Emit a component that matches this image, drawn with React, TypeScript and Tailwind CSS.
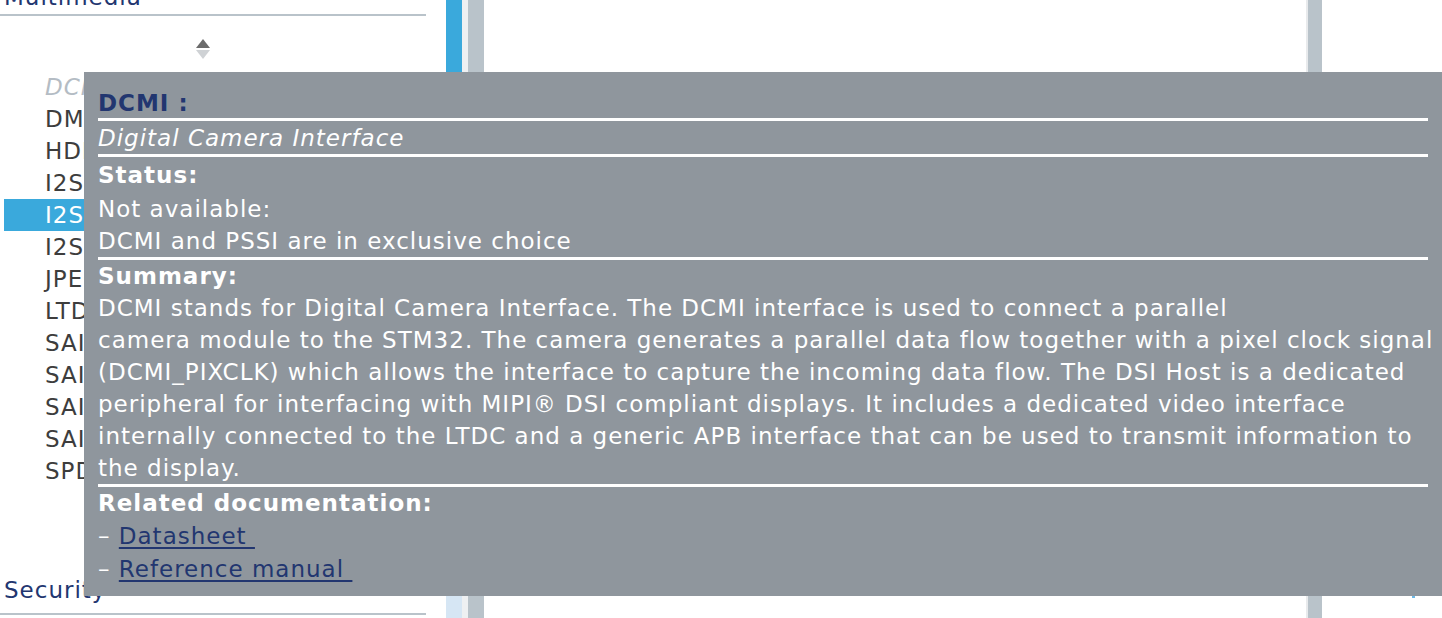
const listItems = [
  'DCMI',
  'DMA2D',
  'HDMI_CEC',
  'I2S1',
  'I2S2',
  'I2S3',
  'JPEG',
  'LTDC',
  'SAI1',
  'SAI2',
  'SAI3',
  'SAI4',
  'SPDIFRX',
]

const summaryLines = [
  'DCMI stands for Digital Camera Interface. The DCMI interface is used to connect a parallel',
  'camera module to the STM32. The camera generates a parallel data flow together with a pixel clock signal',
  '(DCMI_PIXCLK) which allows the interface to capture the incoming data flow. The DSI Host is a dedicated',
  'peripheral for interfacing with MIPI® DSI compliant displays. It includes a dedicated video interface',
  'internally connected to the LTDC and a generic APB interface that can be used to transmit information to',
  'the display.',
]

function SortIcon() {
  return (
    <svg width="18" height="22" viewBox="0 0 18 22">
      <path d="M9 1 L16 10 L2 10 Z" fill="#6b6b6b" />
      <path d="M2 12 L16 12 L9 21 Z" fill="#cfd2d5" />
    </svg>
  )
}

function Rule() {
  return <div className="h-[3px] bg-white mr-[14px]" />
}

function Tooltip() {
  return (
    <div className="absolute left-[84px] top-[72px] right-0 bottom-[22px] bg-[#8f969d] pl-[14px] pt-[15px] text-white text-[23px] leading-[32px] tracking-[1px]">
      <div className="h-[31px] font-bold text-[#223670]">DCMI :</div>
      <Rule />
      <div className="h-[33px] leading-[34px] italic">Digital Camera Interface</div>
      <Rule />
      <div className="font-bold leading-[36px]">Status:</div>
      <div className="leading-[32px]">Not available:</div>
      <div className="leading-[32px]">DCMI and PSSI are in exclusive choice</div>
      <Rule />
      <div className="font-bold">Summary:</div>
      {summaryLines.map((line) => (
        <div key={line} className="whitespace-nowrap">
          {line}
        </div>
      ))}
      <Rule />
      <div className="font-bold">Related documentation:</div>
      <div className="leading-[34px]">
        – <span className="underline underline-offset-[3px] text-[#223670]">Datasheet&nbsp;</span>
      </div>
      <div className="leading-[32px]">
        – <span className="underline underline-offset-[3px] text-[#223670]">Reference manual&nbsp;</span>
      </div>
    </div>
  )
}

export default function App() {
  return (
    <div
      className="relative flex h-[618px] w-[1442px] overflow-hidden bg-white"
      style={{ fontFamily: '"DejaVu Sans", sans-serif' }}
    >
      {/* left: peripheral list */}
      <div className="flex w-[446px] flex-col text-[23px] leading-[32px] tracking-[1px]">
        <div className="-mt-[19px] h-[32px] w-[426px] pl-[4px] text-[#223670]">Multimedia</div>
        <div className="mt-[1px] h-[2px] w-[426px] bg-[#b9c3ca]" />
        <div className="flex h-[54px] w-[426px] items-end pb-[10px] pl-[194px]">
          <SortIcon />
        </div>
        <div className="flex flex-col pt-[1px]">
          {listItems.map((item) =>
            item === 'I2S2' ? (
              <div key={item} className="ml-[4px] h-[32px] w-[422px] bg-[#3aa9dc] pl-[41px] text-white">
                {item}
              </div>
            ) : (
              <div
                key={item}
                className={
                  item === 'DCMI'
                    ? 'h-[32px] pl-[45px] italic text-[#b4bcc4]'
                    : 'h-[32px] pl-[45px] text-[#3d3d3d]'
                }
              >
                {item}
              </div>
            )
          )}
        </div>
        <div className="flex-1" />
        <div className="h-[32px] pl-[4px] text-[#223670]">Security</div>
        <div className="h-[7px]" />
        <div className="mb-[3px] h-[2px] w-[426px] bg-[#b9c3ca]" />
      </div>

      {/* scrollbar and splitter */}
      <div className="flex w-[16px] flex-col bg-[#d6e6f4]">
        <div className="h-[420px] bg-[#3aa9dc]" />
      </div>
      <div className="w-[6px] bg-[#eef0f2]" />
      <div className="w-[16px] bg-[#b9c3ca]" />

      {/* right content */}
      <div className="flex-1 bg-white" />
      <div className="w-[2px] bg-[#e8eaec]" />
      <div className="w-[14px] bg-[#b9c3ca]" />
      <div className="relative w-[120px] bg-white">
        <div className="absolute left-[90px] top-[595px] h-[3px] w-[3px] bg-[#6cb8e6]" />
      </div>

      <Tooltip />
    </div>
  )
}
